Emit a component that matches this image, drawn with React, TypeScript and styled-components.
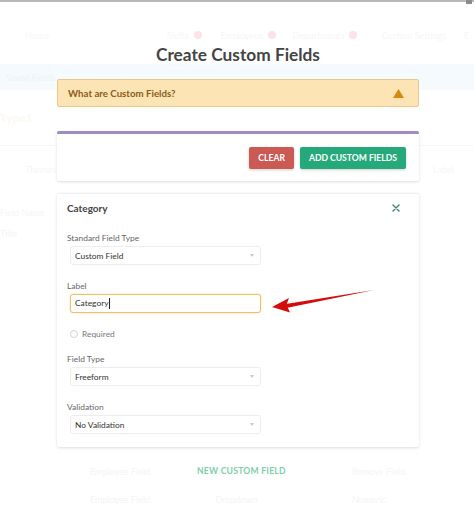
import React from 'react'
import styled, { createGlobalStyle } from 'styled-components'

const GlobalStyle = createGlobalStyle`
  html, body {
    margin: 0;
    padding: 0;
    background: #ffffff;
  }
  body {
    font-family: Lato, "Open Sans", sans-serif;
    color: #333;
  }
`

const Screen = styled.div`
  position: relative;
  width: 474px;
  height: 521px;
  overflow: hidden;
  background: #ffffff;
`

/* ---------- faded page behind the dialog ---------- */

const Backdrop = styled.div`
  display: flex;
  flex-direction: column;
  height: 100%;
`

const TopRule = styled.div`
  display: flex;
  justify-content: flex-end;
  height: 2px;
  background: #b9b9b9;
`

const CornerMark = styled.span`
  width: 6px;
  height: 4px;
  margin-right: 2px;
  background: #8c8c8c;
`

const FaintNav = styled.div`
  display: flex;
  align-items: center;
  height: 20px;
  margin-top: 23px;
  padding-left: 25px;
`

const NavItem = styled.div<{ $w: number }>`
  display: flex;
  align-items: center;
  gap: 5px;
  width: ${p => p.$w}px;
  font-size: 9px;
  color: #f6f6f6;
  white-space: nowrap;
`

const NavDot = styled.span`
  width: 8px;
  height: 8px;
  border-radius: 50%;
  background: #fde2e6;
`

const FaintBand = styled.div`
  height: 26px;
  margin-top: 19px;
  background: #f4fafd;
  display: flex;
  align-items: center;
  padding: 0 6px;
  font-size: 9px;
  color: #eef4f7;
`

const FaintHeading = styled.div`
  margin-top: 20px;
  height: 16px;
  font-size: 12px;
  font-weight: 700;
  color: #fcf8f2;
`

const FaintLine = styled.div`
  margin-top: 19px;
  height: 1px;
  background: #f5f5f5;
`

const FaintRow = styled.div<{ $mt: number }>`
  display: flex;
  justify-content: space-between;
  margin-top: ${p => p.$mt}px;
  padding: 0 20px 0 25px;
  font-size: 9px;
  color: #f6f6f6;
`

const FaintLeft = styled.div<{ $mt: number }>`
  margin-top: ${p => p.$mt}px;
  font-size: 9px;
  color: #f5f5f5;
  line-height: 14px;
`

const TableRow = styled.div<{ $mt: number }>`
  display: grid;
  grid-template-columns: 107px 155px 120px;
  margin-top: ${p => p.$mt}px;
  padding-left: 90px;
  align-items: center;
  font-size: 9px;
  color: #f4f4f4;
  height: 16px;
`

const NewFieldLink = styled.span`
  font-size: 8.6px;
  font-weight: 700;
  letter-spacing: 0.25px;
  color: #7ccfa6;
`

/* ---------- dialog ---------- */

const Dialog = styled.div`
  position: absolute;
  inset: 0;
  display: flex;
  flex-direction: column;
  padding-left: 57px;
`

const Title = styled.h1`
  margin: 43px 0 0;
  width: 362px;
  text-align: center;
  font-size: 17.3px;
  line-height: 24px;
  font-weight: 700;
  color: #444444;
`

const Accordion = styled.div`
  box-sizing: border-box;
  margin-top: 12px;
  width: 362px;
  height: 28px;
  display: flex;
  align-items: center;
  justify-content: space-between;
  padding: 0 14px 0 10px;
  background: #fde4b5;
  border: 1px solid #e8c98a;
  border-radius: 2px;
  font-size: 9.7px;
  font-weight: 700;
  color: #8a5d17;
`

const Card = styled.div<{ $accent?: boolean }>`
  box-sizing: border-box;
  width: 362px;
  background: #ffffff;
  border-radius: 2px;
  border-top: ${p => (p.$accent ? '3px solid #9c8dc5' : '1px solid #f0f0f0')};
  box-shadow: 0 1px 3px rgba(0, 0, 0, 0.14);
`

const ActionCard = styled(Card)`
  margin-top: 24px;
  height: 50px;
  display: flex;
  justify-content: flex-end;
  align-items: flex-start;
  gap: 6px;
  padding: 13px 13px 0 0;
`

const Button = styled.button<{ $tone: 'red' | 'green' }>`
  height: 22px;
  padding: 0 9px;
  border: none;
  border-radius: 2px;
  font-family: inherit;
  font-size: 8.6px;
  font-weight: 700;
  color: #ffffff;
  background: ${p => (p.$tone === 'red' ? '#cb5a55' : '#25a97a')};
  box-shadow: 0 1px 3px rgba(0, 0, 0, 0.2);
`

const FieldCard = styled(Card)`
  margin-top: 12px;
  height: 254px;
  padding: 6px 10px 0;
  display: flex;
  flex-direction: column;
`

const FieldHeader = styled.div`
  display: flex;
  justify-content: space-between;
  align-items: center;
  height: 16px;
  font-size: 10px;
  font-weight: 700;
  color: #444;
  padding-right: 9px;
`

const Group = styled.div<{ $mt: number }>`
  display: flex;
  flex-direction: column;
  margin-top: ${p => p.$mt}px;
`

const Label = styled.div`
  height: 14px;
  line-height: 14px;
  margin-bottom: 1px;
  font-size: 8.4px;
  color: #666;
`

const Control = styled.div<{ $focus?: boolean }>`
  box-sizing: border-box;
  width: 191px;
  height: 19px;
  margin-left: 3px;
  display: flex;
  align-items: center;
  justify-content: space-between;
  padding: 0 6px 0 4px;
  border: 1px solid ${p => (p.$focus ? '#efc164' : '#ededed')};
  border-radius: 3px;
  box-shadow: ${p => (p.$focus ? '0 0 2px rgba(240, 190, 90, 0.6)' : 'none')};
  font-size: 8.4px;
  color: #333;
  background: #fff;
`

const Caret = styled.span`
  width: 0;
  height: 0;
  border-left: 2.5px solid transparent;
  border-right: 2.5px solid transparent;
  border-top: 3.5px solid #c8c8c8;
`

const Cursor = styled.span`
  display: inline-block;
  width: 1px;
  height: 11px;
  background: #222;
  vertical-align: middle;
`

const CheckRow = styled.div`
  display: flex;
  align-items: center;
  gap: 4px;
  margin: 14px 0 0 3px;
  height: 14px;
  font-size: 8.4px;
  color: #777;
`

const Radio = styled.span`
  box-sizing: border-box;
  width: 8px;
  height: 8px;
  border-radius: 50%;
  border: 1px solid #d2d2d2;
`

const Arrow = styled.svg`
  position: absolute;
  left: 268px;
  top: 286px;
`

const CloseIcon = () => (
  <svg width="8" height="8" viewBox="0 0 8 8">
    <path d="M1 1L7 7M7 1L1 7" stroke="#3f8177" strokeWidth="1.4" strokeLinecap="round" />
  </svg>
)

const Select = ({ value }: { value: string }) => (
  <Control>
    <span>{value}</span>
    <Caret />
  </Control>
)

export default function App() {
  return (
    <Screen>
      <GlobalStyle />
      <Backdrop>
        <TopRule>
          <CornerMark />
        </TopRule>
        <FaintNav>
          <NavItem $w={143}>Home</NavItem>
          <NavItem $w={54}>Shifts<NavDot /></NavItem>
          <NavItem $w={73}>Employees<NavDot /></NavItem>
          <NavItem $w={90}>Departments<NavDot /></NavItem>
          <NavItem $w={83}>Custom Settings</NavItem>
          <NavItem $w={10}>E</NavItem>
        </FaintNav>
        <FaintBand>Saved Fields</FaintBand>
        <FaintHeading>Type1</FaintHeading>
        <FaintLine />
        <FaintRow $mt={18}>
          <span>Themes</span>
          <span>Label</span>
        </FaintRow>
        <FaintLeft $mt={31}>Field Name</FaintLeft>
        <FaintLeft $mt={7}>Title</FaintLeft>
        <TableRow $mt={222}>
          <span>Employee Field</span>
          <NewFieldLink>NEW CUSTOM FIELD</NewFieldLink>
          <span>Remove Field</span>
        </TableRow>
        <TableRow $mt={12}>
          <span>Employee Field</span>
          <span>&nbsp;&nbsp;&nbsp;&nbsp;&nbsp;&nbsp;&nbsp;&nbsp;Dropdown</span>
          <span>Numeric</span>
        </TableRow>
      </Backdrop>

      <Dialog>
        <Title>Create Custom Fields</Title>
        <Accordion>
          <span>What are Custom Fields?</span>
          <svg width="11" height="9" viewBox="0 0 11 9">
            <path d="M5.5 0L11 9H0Z" fill="#d48a0d" />
          </svg>
        </Accordion>

        <ActionCard $accent>
          <Button $tone="red">CLEAR</Button>
          <Button $tone="green">ADD CUSTOM FIELDS</Button>
        </ActionCard>

        <FieldCard>
          <FieldHeader>
            <span>Category</span>
            <CloseIcon />
          </FieldHeader>

          <Group $mt={15}>
            <Label>Standard Field Type</Label>
            <Select value="Custom Field" />
          </Group>

          <Group $mt={14}>
            <Label>Label</Label>
            <Control $focus>
              <span>
                Category
                <Cursor />
              </span>
            </Control>
          </Group>

          <CheckRow>
            <Radio />
            <span>Required</span>
          </CheckRow>

          <Group $mt={11}>
            <Label>Field Type</Label>
            <Select value="Freeform" />
          </Group>

          <Group $mt={14}>
            <Label>Validation</Label>
            <Select value="No Validation" />
          </Group>
        </FieldCard>
      </Dialog>

      <Arrow width="110" height="28" viewBox="0 0 110 28">
        <path d="M106 4 L16 18.2 L17 22.2 Z" fill="#d30d0d" />
        <path d="M4 21 L21 12 L18.5 18.8 L22 26.5 Z" fill="#d30d0d" />
      </Arrow>
    </Screen>
  )
}
